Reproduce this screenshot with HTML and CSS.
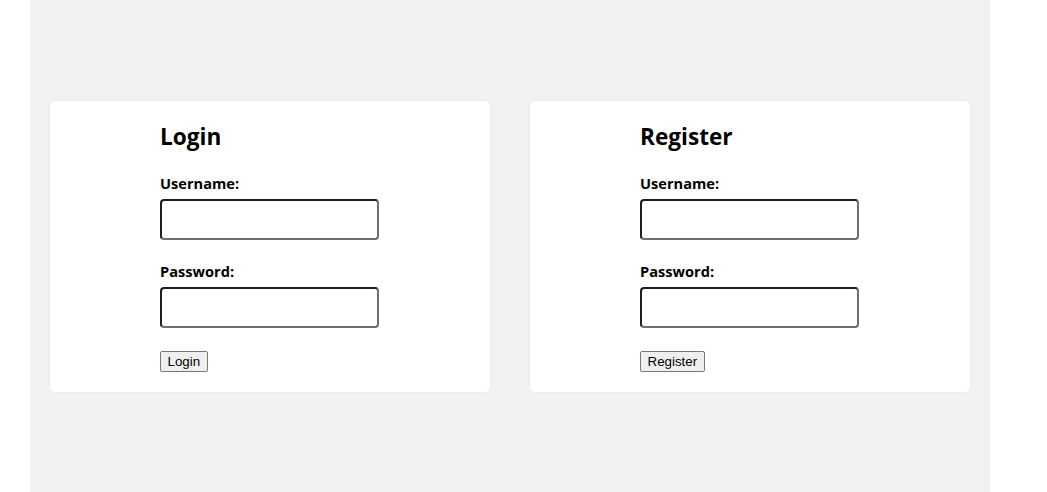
FILE: index.html
```html
<!DOCTYPE html>
<html>
<head>
<meta charset="utf-8">
<link rel="stylesheet" href="styles.css">
</head>
<body>
<div class="page">
  <div class="card">
    <form class="form">
      <h2 class="title">Login</h2>
      <label class="label">Username:</label>
      <input class="field" type="text">
      <label class="label">Password:</label>
      <input class="field" type="password">
      <div class="actions"><button class="btn" type="button">Login</button></div>
    </form>
  </div>
  <div class="card">
    <form class="form">
      <h2 class="title">Register</h2>
      <label class="label">Username:</label>
      <input class="field" type="text">
      <label class="label">Password:</label>
      <input class="field" type="password">
      <div class="actions"><button class="btn" type="button">Register</button></div>
    </form>
  </div>
</div>
</body>
</html>
```
FILE: styles.css
```css
html, body {
  margin: 0;
  padding: 0;
  height: 100%;
  background: #ffffff;
}
body {
  font-family: "Open Sans", "Noto Sans", sans-serif;
}
.page {
  width: 960px;
  height: 100%;
  margin-left: 30px;
  background: #f2f2f2;
  box-sizing: border-box;
  padding: 0 20px;
  display: flex;
  align-items: center;
  gap: 40px;
}
.card {
  width: 440px;
  background: #ffffff;
  border-radius: 5px;
  box-shadow: 0 0 3px rgba(0,0,0,0.06);
  box-sizing: border-box;
  padding: 20px 0 20px;
}
.form {
  width: 220px;
  margin: 0 auto;
  display: flex;
  flex-direction: column;
  align-items: flex-start;
}
.title {
  margin: 0 0 20px;
  font-size: 22.6px;
  line-height: 32px;
  font-weight: 700;
  color: #000;
}
.label {
  font-size: 14.6px;
  line-height: 20px;
  font-weight: 700;
  color: #000;
  margin-bottom: 6px;
}
.field {
  width: 219px;
  height: 41px;
  box-sizing: border-box;
  border: 2px solid;
  border-color: #1e1e1e #6e6e6e #6e6e6e #1e1e1e;
  border-radius: 4px;
  margin: 0 0 21px;
  padding: 0 4px;
  background: #fff;
}
.actions {
  margin-top: 2px;
  display: flex;
}
.btn {
  font-family: "Liberation Sans", Arial, sans-serif;
  font-size: 13.33px;
  height: 21px;
  padding: 0 6.5px;
  border: 1px solid #767676;
  border-radius: 2px;
  background: #efefef;
  color: #000;
  line-height: 17px;
}
```
